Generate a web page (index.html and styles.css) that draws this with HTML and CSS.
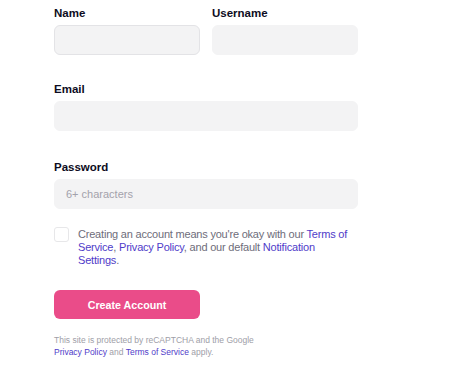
FILE: index.html
```html
<!DOCTYPE html>
<html>
<head>
<meta charset="utf-8">
<link rel="stylesheet" href="styles.css">
</head>
<body>
<form class="form">
  <div class="row">
    <div class="field">
      <label class="label">Name</label>
      <div class="input input-hover"></div>
    </div>
    <div class="field">
      <label class="label">Username</label>
      <div class="input"></div>
    </div>
  </div>
  <div class="field wide">
    <label class="label">Email</label>
    <div class="input"></div>
  </div>
  <div class="field wide wide-pass">
    <label class="label">Password</label>
    <div class="input"><span class="placeholder">6+ characters</span></div>
  </div>
  <div class="consent">
    <span class="checkbox"></span>
    <p class="consent-text">Creating an account means you're okay with our <a class="link">Terms of Service</a>, <a class="link">Privacy Policy</a>, and our default <a class="link">Notification Settings</a>.</p>
  </div>
  <button class="button" type="button">Create Account</button>
  <p class="fine">This site is protected by reCAPTCHA and the Google<br><a class="link">Privacy Policy</a> and <a class="link">Terms of Service</a> apply.</p>
</form>
</body>
</html>
```
FILE: styles.css
```css
html, body {
  margin: 0;
  padding: 0;
  background: #ffffff;
}
body {
  font-family: "Liberation Sans", Arial, sans-serif;
  color: #0d0c22;
}
.form {
  padding: 5px 0 0 54px;
  width: 304px;
  display: flex;
  flex-direction: column;
}
.row {
  display: flex;
  gap: 12px;
}
.row .field {
  width: 146px;
}
.field {
  display: flex;
  flex-direction: column;
}
.wide {
  width: 304px;
  margin-top: 26px;
}
.wide-pass {
  margin-top: 28px;
}
.label {
  font-size: 11.5px;
  font-weight: 700;
  line-height: 16px;
  height: 16px;
  margin-bottom: 4px;
}
.input {
  box-sizing: border-box;
  height: 30px;
  border-radius: 6px;
  background: #f3f3f4;
  border: 1px solid #f3f3f4;
  display: flex;
  align-items: center;
  padding: 0 11px;
}
.input-hover {
  border-color: #e3e3e6;
}
.placeholder {
  font-size: 11px;
  color: #a3a2ab;
}
.consent {
  display: flex;
  align-items: flex-start;
  margin-top: 18px;
}
.checkbox {
  box-sizing: border-box;
  flex: none;
  width: 15px;
  height: 15px;
  border: 1px solid #e7e7e9;
  border-radius: 3px;
}
.consent-text {
  margin: 1px 0 0 9px;
  font-size: 11px;
  letter-spacing: -0.2px;
  line-height: 13px;
  color: #6e6d7a;
}
.link {
  color: #4f3cc9;
  text-decoration: none;
}
.button {
  margin-top: 23px;
  width: 146px;
  height: 29px;
  border: none;
  border-radius: 6px;
  background: #ea4c89;
  color: #ffffff;
  font-family: "Liberation Sans", Arial, sans-serif;
  font-size: 10.7px;
  font-weight: 700;
  padding: 0;
}
.fine {
  margin: 15px 0 0 0;
  font-size: 8.5px;
  line-height: 12px;
  color: #9e9ea7;
}
.fine .link {
  color: #4f3cc9;
}
```
